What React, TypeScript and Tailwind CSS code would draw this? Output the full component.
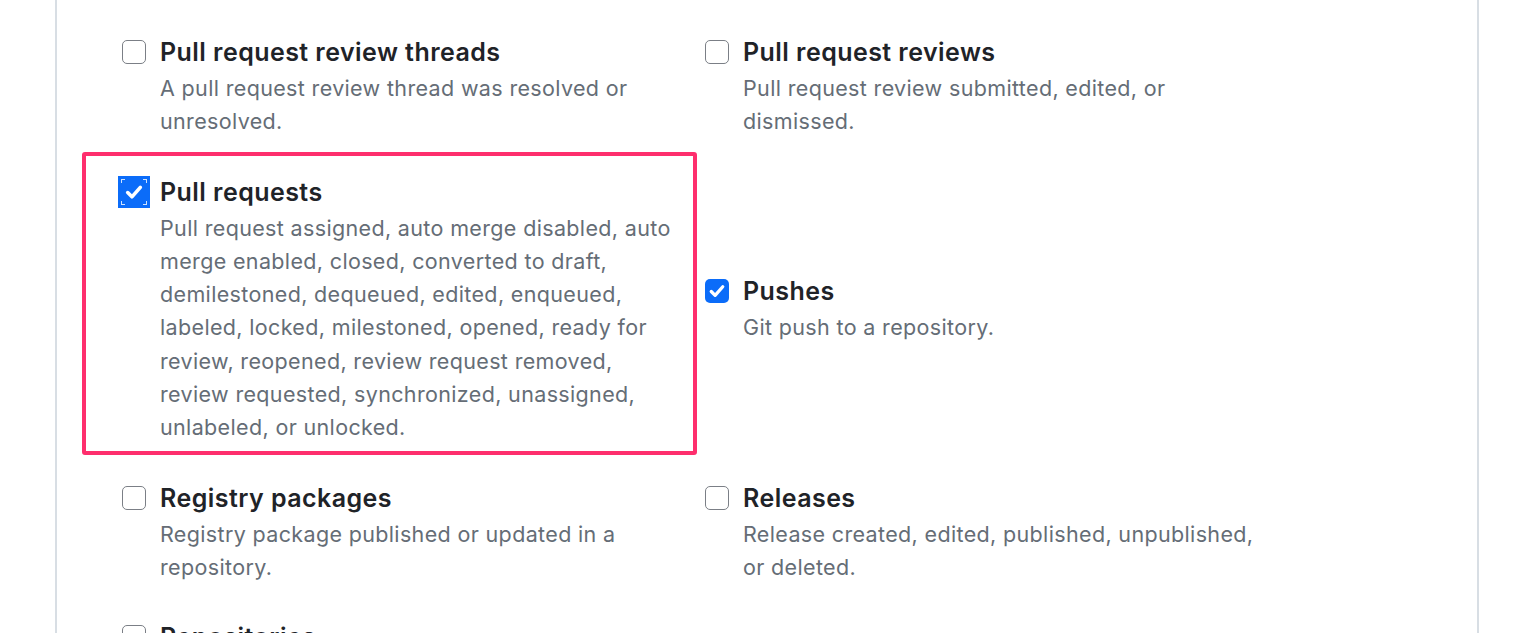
import type { ReactNode } from 'react';

type EventItem = {
  title: string;
  description: string;
  checked?: boolean;
  focused?: boolean;
  highlighted?: boolean;
};

const EVENTS: EventItem[] = [
  {
    title: 'Pull request review threads',
    description: 'A pull request review thread was resolved or unresolved.'
  },
  {
    title: 'Pull request reviews',
    description: 'Pull request review submitted, edited, or dismissed.'
  },
  {
    title: 'Pull requests',
    description:
      'Pull request assigned, auto merge disabled, auto merge enabled, closed, converted to draft, demilestoned, dequeued, edited, enqueued, labeled, locked, milestoned, opened, ready for review, reopened, review request removed, review requested, synchronized, unassigned, unlabeled, or unlocked.',
    checked: true,
    focused: true,
    highlighted: true
  },
  {
    title: 'Pushes',
    description: 'Git push to a repository.',
    checked: true
  },
  {
    title: 'Registry packages',
    description: 'Registry package published or updated in a repository.'
  },
  {
    title: 'Releases',
    description: 'Release created, edited, published, unpublished, or deleted.'
  },
  {
    title: 'Repositories',
    description: 'Repository created, deleted, archived, unarchived, publicized, privatized, edited, renamed, or transferred.'
  },
  {
    title: 'Repository advisories',
    description: 'Repository advisory published or withdrawn.'
  }
];

function Check({ size }: { size: string }) {
  return (
    <svg viewBox="0 0 16 16" className={size} fill="none">
      <path
        d="M3.4 8.4 6.5 11.5 12.6 4.6"
        stroke="white"
        strokeWidth="2.6"
        strokeLinecap="round"
        strokeLinejoin="round"
      />
    </svg>
  );
}

function Checkbox({ checked, focused }: { checked?: boolean; focused?: boolean }) {
  if (checked && focused) {
    return (
      <span className="relative -m-1 flex h-8 w-8 shrink-0 items-center justify-center bg-[#0b6cf9]">
        <span className="absolute left-[3px] top-[3px] h-[4px] w-[4px] border-l border-t border-white/80" />
        <span className="absolute right-[3px] top-[3px] h-[4px] w-[4px] border-r border-t border-white/80" />
        <span className="absolute left-[3px] bottom-[3px] h-[4px] w-[4px] border-l border-b border-white/80" />
        <span className="absolute right-[3px] bottom-[3px] h-[4px] w-[4px] border-r border-b border-white/80" />
        <Check size="w-[22px] h-[22px]" />
      </span>
    );
  }
  if (checked) {
    return (
      <span className="flex h-6 w-6 shrink-0 items-center justify-center rounded-[5px] bg-[#0b6cf9]">
        <Check size="w-[20px] h-[20px]" />
      </span>
    );
  }
  return <span className="h-6 w-6 shrink-0 rounded-[5px] border-[1.5px] border-[#7b7f86] bg-white" />;
}

function EventOption({ item }: { item: EventItem }): ReactNode {
  return (
    <label className="relative flex gap-[14px]">
      {item.highlighted && (
        <span className="pointer-events-none absolute -left-[40px] -top-[20px] -bottom-[10px] right-[8px] rounded-[3px] border-[4px] border-[#fe2e6d]" />
      )}
      <span className="flex h-10 w-6 shrink-0 items-center justify-center">
        <Checkbox checked={item.checked} focused={item.focused} />
      </span>
      <span className="flex flex-col">
        <span className="text-[25px] leading-[40px] font-semibold tracking-[0.45px] text-[#1f2328]">
          {item.title}
        </span>
        <span className="max-w-[516px] text-[21.5px] leading-[33.3px] tracking-[0.35px] text-[#656d76]">
          {item.description}
        </span>
      </span>
    </label>
  );
}

export default function App() {
  return (
    <div
      className="h-[633px] overflow-hidden bg-white"
      style={{ fontFamily: 'Inter, "Noto Sans", sans-serif' }}
    >
      <div className="ml-[55px] h-full w-[1424px] border-x-2 border-[#d8dee4] bg-white">
        <div className="grid grid-cols-[583px_583px] items-center gap-y-[33px] pl-[65px] pt-[32px]">
          {EVENTS.map((item) => (
            <EventOption key={item.title} item={item} />
          ))}
        </div>
      </div>
    </div>
  );
}
